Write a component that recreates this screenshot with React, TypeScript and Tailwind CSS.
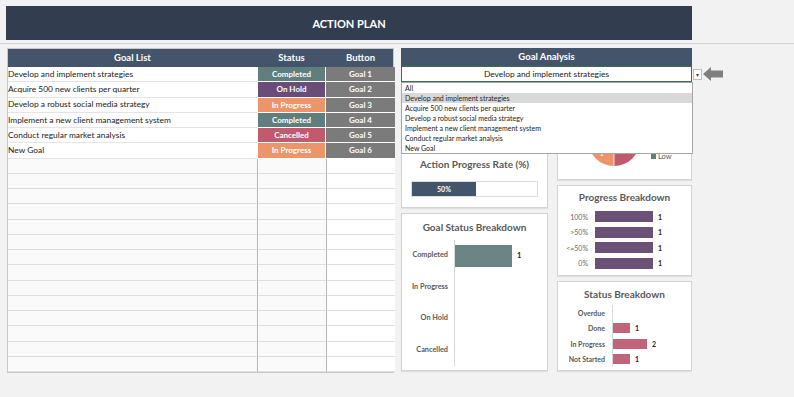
import React from "react";

const GOALS = [
  { name: "Develop and implement strategies", status: "Completed", color: "bg-[#5f7e7d]" },
  { name: "Acquire 500 new clients per quarter", status: "On Hold", color: "bg-[#6a4c78]" },
  { name: "Develop a robust social media strategy", status: "In Progress", color: "bg-[#ec956a]" },
  { name: "Implement a new client management system", status: "Completed", color: "bg-[#5f7e7d]" },
  { name: "Conduct regular market analysis", status: "Cancelled", color: "bg-[#c25a6d]" },
  { name: "New Goal", status: "In Progress", color: "bg-[#ec956a]" },
];

const OPTIONS = [
  "All",
  "Develop and implement strategies",
  "Acquire 500 new clients per quarter",
  "Develop a robust social media strategy",
  "Implement a new client management system",
  "Conduct regular market analysis",
  "New Goal",
];

function Card({ className, children }: { className: string; children: React.ReactNode }) {
  return (
    <div className={`border border-[#d3d3d3] bg-white shadow-[0_1px_1px_rgba(0,0,0,0.08)] ${className}`}>
      {children}
    </div>
  );
}

function GoalTable() {
  const empty = Array.from({ length: 14 });
  return (
    <div className="w-[387px] border border-[#c8c8c8] bg-[#fafafa]">
      <div className="grid h-[18px] grid-cols-[249px_69px_69px] bg-[#44546a] text-[9.5px] font-bold text-white">
        <div className="flex items-center justify-center">Goal List</div>
        <div className="flex items-center justify-center">Status</div>
        <div className="flex items-center justify-center">Button</div>
      </div>
      {GOALS.map((g, i) => (
        <div key={i} className="grid h-[15.25px] grid-cols-[249px_69px_69px]">
          <div className="flex items-center border-b border-[#e4e4e4] bg-white text-[8.4px] text-[#1a1a1a]">{g.name}</div>
          <div className={`flex items-center justify-center border border-t-0 border-white text-[8px] font-bold text-white ${g.color}`}>
            {g.status}
          </div>
          <div className="flex items-center justify-center border-b border-white bg-[#7b7b7b] text-[8px] font-bold text-white">
            Goal {i + 1}
          </div>
        </div>
      ))}
      {empty.map((_, i) => (
        <div key={i} className="grid h-[15.25px] grid-cols-[249px_69px_69px]">
          <div className="border-b border-[#dedede]" />
          <div className="border-b border-l border-[#dedede] border-l-[#b5b5b5]" />
          <div className="border-b border-l border-[#dedede] border-l-[#b5b5b5] bg-white" />
        </div>
      ))}
    </div>
  );
}

function ArrowLeft() {
  return (
    <svg width="20" height="14" viewBox="0 0 20 14">
      <polygon points="0,7 8,0 8,3.5 20,3.5 20,10.5 8,10.5 8,14" fill="#7f7f7f" />
    </svg>
  );
}

function GoalStatusChart() {
  const rows = ["Completed", "In Progress", "On Hold", "Cancelled"];
  return (
    <div className="mt-[5px] flex pr-[10px]">
      <div className="flex w-[46px] flex-col">
        {rows.map((r) => (
          <div key={r} className="flex h-[31.5px] items-center justify-end text-[7.3px] font-bold text-[#595959]">
            {r}
          </div>
        ))}
      </div>
      <div className="ml-[6px] flex flex-1 flex-col border-l border-[#d9d9d9]">
        {rows.map((r, i) => (
          <div key={r} className="flex h-[31.5px] items-center">
            {i === 0 && (
              <>
                <div className="h-[22px] w-[57px] bg-[#6a8584]" />
                <span className="ml-[5px] text-[7.5px] font-bold text-[#222]">1</span>
              </>
            )}
          </div>
        ))}
      </div>
    </div>
  );
}

function ProgressChart() {
  const rows = ["100%", ">50%", "<=50%", "0%"];
  return (
    <div className="mt-[4px] flex flex-col">
      {rows.map((r) => (
        <div key={r} className="flex h-[15.6px] items-center">
          <div className="w-[30px] text-right text-[7px] text-[#666]">{r}</div>
          <div className="ml-[7px] h-[11px] w-[58px] bg-[#6b5078]" />
          <span className="ml-[5px] text-[7px] font-bold text-[#222]">1</span>
        </div>
      ))}
    </div>
  );
}

function StatusChart() {
  const rows = [
    { label: "Overdue", w: 0, v: "" },
    { label: "Done", w: 17, v: "1" },
    { label: "In Progress", w: 34, v: "2" },
    { label: "Not Started", w: 17, v: "1" },
  ];
  return (
    <div className="mt-[3px] flex">
      <div className="flex w-[47px] flex-col">
        {rows.map((r) => (
          <div key={r.label} className="flex h-[15.5px] items-center justify-end text-[7px] font-bold text-[#595959]">
            {r.label}
          </div>
        ))}
      </div>
      <div className="ml-[7px] flex flex-col border-l border-[#d9d9d9]">
        {rows.map((r) => (
          <div key={r.label} className="flex h-[15.5px] items-center">
            {r.w > 0 && (
              <>
                <div className="h-[10px] bg-[#c0647a]" style={{ width: r.w }} />
                <span className="ml-[5px] text-[7px] font-bold text-[#222]">{r.v}</span>
              </>
            )}
          </div>
        ))}
      </div>
    </div>
  );
}

export default function App() {
  return (
    <div className="relative h-[397px] w-[794px] overflow-hidden bg-[#f2f2f2] font-['Lato','Open_Sans',sans-serif]">
      <div className="px-[6px] pt-[6px]">
        <div className="flex h-[34px] w-[686px] items-center justify-center pt-[2px] bg-[#323e4f] text-[11px] font-bold text-white">
          ACTION PLAN
        </div>
      </div>
      <div className="mt-[3px] h-px bg-[#d2d2d2]" />

      <div className="flex gap-[7px] px-[7px] pt-[4px]">
        <GoalTable />

        <div className="relative w-[291px]">
          <div className="flex h-[18px] items-center justify-center bg-[#44546a] text-[9.5px] font-bold text-white">
            Goal Analysis
          </div>
          <div className="relative flex h-[16px] items-center justify-center border border-[#3c6e4b] bg-white text-[8.4px] text-[#1a1a1a]">
            Develop and implement strategies
            <div className="absolute left-[291px] top-[2px] flex h-[11px] w-[9px] items-center justify-center border border-[#bdbdbd] bg-white text-[6px] text-[#444]">
              ▾
            </div>
            <div className="absolute left-[301px] top-0">
              <ArrowLeft />
            </div>
          </div>

          <div className="mt-[4px] flex gap-[9px]">
            <div className="flex w-[147px] flex-col gap-[5px]">
              <Card className="flex h-[122px] flex-col justify-end px-[9px] pb-[10px]">
                <div className="text-center text-[10px] font-bold text-[#595959]">Action Progress Rate (%)</div>
                <div className="mt-[9px] flex h-[16px] border border-[#dcdcdc]">
                  <div className="flex w-[64px] items-center justify-center bg-[#44546a] text-[7px] font-bold text-white">
                    50%
                  </div>
                  <div className="flex-1 bg-white" />
                </div>
              </Card>
              <Card className="h-[158px] pt-[6px]">
                <div className="text-center text-[10px] font-bold text-[#595959]">Goal Status Breakdown</div>
                <GoalStatusChart />
              </Card>
            </div>

            <div className="flex w-[135px] flex-col gap-[5px]">
              <Card className="relative h-[94px]">
                <div className="flex h-full items-end pb-[13px] pl-[30px]">
                  <svg width="52" height="52" viewBox="0 0 52 52">
                    <path d="M26 26 L26 0 A26 26 0 0 1 52 26 Z" fill="#6b5078" />
                    <path d="M26 26 L52 26 A26 26 0 0 1 26 52 Z" fill="#c25a6d" />
                    <path d="M26 26 L26 52 A26 26 0 0 1 0 26 Z" fill="#ec956a" />
                    <path d="M26 26 L0 26 A26 26 0 0 1 26 0 Z" fill="#5f7e7d" />
                    <line x1="26" y1="26" x2="26" y2="52" stroke="#fff" strokeWidth="0.8" />
                    <text x="12" y="42" fontSize="6" fill="#fff" fontWeight="bold">1</text>
                  </svg>
                  <div className="mb-[4px] ml-[11px] flex items-center gap-[2px] text-[7.5px] text-[#595959]">
                    <span className="inline-block h-[5px] w-[5px] bg-[#5f7e7d]" />
                    Low
                  </div>
                </div>
              </Card>
              <Card className="h-[91px] pt-[4px]">
                <div className="text-center text-[10px] font-bold text-[#595959]">Progress Breakdown</div>
                <ProgressChart />
              </Card>
              <Card className="h-[90px] pt-[5px]">
                <div className="text-center text-[10px] font-bold text-[#595959]">Status Breakdown</div>
                <StatusChart />
              </Card>
            </div>
          </div>

          <div className="absolute left-0 top-[34px] w-[292px] border border-[#a6a6a6] bg-white text-[7px] text-[#222]">
            {OPTIONS.map((o, i) => (
              <div
                key={o}
                className={`flex h-[10px] items-center pl-[3px] ${i === 1 ? "bg-[#d9d9d9]" : ""}`}
              >
                {o}
              </div>
            ))}
          </div>
        </div>
      </div>
    </div>
  );
}
